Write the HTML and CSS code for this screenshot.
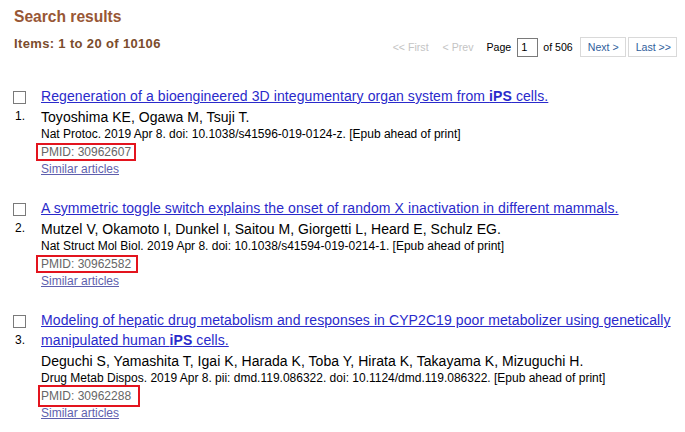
FILE: index.html
```html
<!DOCTYPE html>
<html lang="en">
<head>
<meta charset="utf-8">
<title>Search results</title>
<link rel="stylesheet" href="styles.css">
</head>
<body>
<div class="page">
  <h2 class="heading">Search results</h2>
  <div class="result-bar">
    <h3 class="count">Items: 1 to 20 of 10106</h3>
    <div class="pager">
      <span class="pg-disabled pg-first">&lt;&lt; First</span>
      <span class="pg-disabled pg-prev">&lt; Prev</span>
      <span class="pg-label">Page</span>
      <span class="pg-input">1</span>
      <span class="pg-of">of 506</span>
      <a class="pg-btn" href="#">Next &gt;</a>
      <a class="pg-btn pg-last" href="#">Last &gt;&gt;</a>
    </div>
  </div>

  <div class="results">
    <div class="rprt">
      <div class="rprt-side">
        <span class="chk"></span>
        <span class="num">1.</span>
      </div>
      <div class="rprt-body">
        <p class="title"><a href="#"><span>Regeneration of a bioengineered 3D integumentary organ system from </span><b>iPS</b><span> cells.</span></a></p>
        <p class="authors">Toyoshima KE, Ogawa M, Tsuji T.</p>
        <p class="jrnl">Nat Protoc. 2019 Apr 8. doi: 10.1038/s41596-019-0124-z. [Epub ahead of print]</p>
        <div class="pmid"><span class="pmid-box">PMID: 30962607</span></div>
        <p class="links"><a href="#">Similar articles</a></p>
      </div>
    </div>

    <div class="rprt">
      <div class="rprt-side">
        <span class="chk"></span>
        <span class="num">2.</span>
      </div>
      <div class="rprt-body">
        <p class="title"><a href="#">A symmetric toggle switch explains the onset of random X inactivation in different mammals.</a></p>
        <p class="authors">Mutzel V, Okamoto I, Dunkel I, Saitou M, Giorgetti L, Heard E, Schulz EG.</p>
        <p class="jrnl">Nat Struct Mol Biol. 2019 Apr 8. doi: 10.1038/s41594-019-0214-1. [Epub ahead of print]</p>
        <div class="pmid"><span class="pmid-box pmid-box-wide">PMID: 30962582</span></div>
        <p class="links"><a href="#">Similar articles</a></p>
      </div>
    </div>

    <div class="rprt">
      <div class="rprt-side">
        <span class="chk"></span>
        <span class="num">3.</span>
      </div>
      <div class="rprt-body">
        <p class="title"><a href="#"><span class="line">Modeling of hepatic drug metabolism and responses in CYP2C19 poor metabolizer using genetically</span> <span>manipulated human </span><b>iPS</b><span> cells.</span></a></p>
        <p class="authors">Deguchi S, Yamashita T, Igai K, Harada K, Toba Y, Hirata K, Takayama K, Mizuguchi H.</p>
        <p class="jrnl">Drug Metab Dispos. 2019 Apr 8. pii: dmd.119.086322. doi: 10.1124/dmd.119.086322. [Epub ahead of print]</p>
        <div class="pmid"><span class="pmid-box pmid-box-tall">PMID: 30962288</span></div>
        <p class="links"><a href="#">Similar articles</a></p>
      </div>
    </div>
  </div>
</div>
</body>
</html>
```

FILE: styles.css
```css
html, body {
  margin: 0;
  padding: 0;
  background: #ffffff;
}

body {
  font-family: "Liberation Sans", Arial, sans-serif;
  font-size: 12px;
  color: #000000;
}

.page {
  padding: 7px 8px 0 14px;
}

.heading {
  margin: 0;
  font-size: 15.6px;
  line-height: 20px;
  font-weight: bold;
  color: #985735;
}

.result-bar {
  display: flex;
  justify-content: space-between;
  align-items: flex-start;
  margin-top: 10px;
  height: 20px;
}

.count {
  margin: 0;
  font-size: 13px;
  line-height: 14px;
  font-weight: bold;
  letter-spacing: 0.35px;
  color: #7b4c2c;
}

.pager {
  display: flex;
  align-items: center;
  height: 20px;
  font-size: 10.6px;
  line-height: 18px;
}

.pg-disabled {
  color: #c4c4c4;
}

.pg-prev {
  margin-left: 14px;
}

.pg-label {
  margin-left: 13px;
}

.pg-input {
  box-sizing: border-box;
  width: 21px;
  height: 19px;
  margin-left: 6px;
  padding-left: 3px;
  border: 1px solid #7a7a7a;
  line-height: 17px;
  font-size: 11px;
}

.pg-of {
  margin-left: 5px;
}

.pg-btn {
  box-sizing: border-box;
  height: 20px;
  margin-left: 7px;
  padding: 0 6px 0 7px;
  border: 1px solid #d9d9d9;
  color: #30609c;
  text-decoration: none;
}

.pg-last {
  margin-left: 2px;
  padding-right: 5px;
}

.results {
  margin-top: 29px;
}

.rprt {
  display: flex;
  margin-bottom: 21px;
}

.rprt-side {
  display: flex;
  flex-direction: column;
  width: 27px;
  flex: none;
}

.chk {
  box-sizing: border-box;
  width: 13px;
  height: 13px;
  margin-top: 4.5px;
  margin-left: -1px;
  border: 1px solid #7a7a7a;
  background: #ffffff;
}

.num {
  margin-top: 4px;
  margin-left: 1px;
  font-size: 12px;
  line-height: 16px;
}

.rprt-body {
  flex: 1;
  min-width: 0;
}

.rprt-body p {
  margin: 0;
}

.title {
  font-size: 14px;
  line-height: 20px;
  letter-spacing: 0.09px;
}

.title a {
  color: #2a2acb;
  text-decoration: underline;
}

.title .line {
  white-space: nowrap;
}

.rprt-body .authors {
  margin-top: 2px;
  font-size: 14px;
  line-height: 18px;
  letter-spacing: 0.04px;
}

.jrnl {
  font-size: 12px;
  line-height: 16px;
}

.pmid {
  display: flex;
  align-items: center;
  height: 18px;
  margin-top: 1px;
}

.pmid-box {
  box-sizing: border-box;
  height: 18px;
  margin-left: -5px;
  padding: 0 3px;
  border: 2px solid #e3141e;
  color: #666666;
  font-size: 12px;
  line-height: 14px;
}

.pmid-box-wide {
  padding-right: 5px;
}

.pmid-box-tall {
  height: 22px;
  margin-left: -3px;
  padding: 2px 7px 2px 1px;
}

.links {
  font-size: 12px;
  line-height: 16px;
}

.links a {
  color: #5f5fae;
  text-decoration: underline;
}
```
